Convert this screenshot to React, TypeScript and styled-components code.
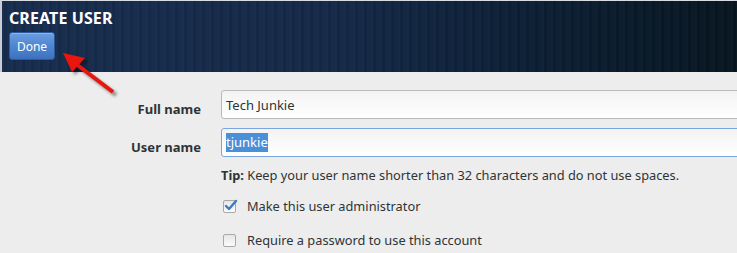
import React from "react";
import styled, { createGlobalStyle } from "styled-components";

const Global = createGlobalStyle`
  html, body { margin: 0; padding: 0; background: #ededed; overflow: hidden; }
  body { font-family: "Noto Sans", "Open Sans", sans-serif; color: #2e3436; }
`;

const Page = styled.div`
  position: relative;
  width: 737px;
  height: 253px;
  background: #ededed;
  overflow: hidden;
`;

const Header = styled.header`
  height: 71px;
  border-top: 1px solid #d9dde3;
  border-left: 2px solid #c9ced6;
  box-sizing: content-box;
  padding: 0 0 0 7px;
  display: flex;
  flex-direction: column;
  align-items: flex-start;
  background:
    repeating-linear-gradient(90deg, rgba(255,255,255,0.025) 0 2px, rgba(0,0,0,0.03) 2px 5px, rgba(255,255,255,0.015) 5px 9px),
    linear-gradient(90deg, #172b4d 0%, #142846 45%, #0c1f35 70%, #06151f 100%);
`;

const Title = styled.h1`
  margin: 7px 0 0 0;
  font-size: 16px;
  line-height: 21px;
  font-weight: 700;
  color: #ffffff;
  letter-spacing: 0.1px;
`;

const DoneButton = styled.button`
  margin-top: 3px;
  width: 46px;
  height: 28px;
  border-radius: 3px;
  border: 1px solid #2c5a9c;
  background: linear-gradient(180deg, #6b9ee0 0%, #4f86d2 50%, #3e71bd 100%);
  box-shadow: inset 0 1px 0 rgba(255,255,255,0.25);
  color: #ffffff;
  font-family: "Noto Sans", sans-serif;
  font-size: 12px;
  font-weight: 400;
  padding: 0;
`;

const Form = styled.div`
  display: grid;
  grid-template-columns: 201px 560px;
  column-gap: 20px;
  padding-top: 18px;
  align-items: center;
`;

const Label = styled.label`
  justify-self: end;
  font-size: 13px;
  font-weight: 700;
  color: #2e3436;
`;

const Field = styled.div<{ $focused?: boolean }>`
  height: 27px;
  margin-bottom: 9px;
  border: 1px solid ${(p) => (p.$focused ? "#79a6e0" : "#b9b9b9")};
  border-radius: 3px;
  background: linear-gradient(180deg, #f3f3f3 0%, #ffffff 100%);
  display: flex;
  align-items: center;
  padding-left: 4px;
  font-size: 13px;
  color: #2e3436;
`;

const Selected = styled.span`
  background: #4a90d9;
  color: #ffffff;
  line-height: 19px;
`;

const Spacer = styled.div``;

const Tip = styled.div`
  margin-top: 1px;
  font-size: 12.8px;
  color: #2e3436;
  line-height: 16px;
  b { font-weight: 700; }
`;

const CheckRow = styled.div<{ $gap: number }>`
  margin-top: ${(p) => p.$gap}px;
  display: flex;
  align-items: center;
  font-size: 12.8px;
  line-height: 16px;
`;

const Box = styled.span`
  width: 11px;
  height: 11px;
  margin-left: 2px;
  margin-right: 11px;
  border: 1px solid #a8a8a8;
  border-radius: 2px;
  background: linear-gradient(180deg, #e6e6e6, #fbfbfb);
  position: relative;
  display: inline-block;
`;

const CheckMark = styled.svg`
  position: absolute;
  left: 0;
  top: -2px;
`;

const Arrow = styled.svg`
  position: absolute;
  left: 0;
  top: 0;
  pointer-events: none;
`;

export default function App() {
  return (
    <>
      <Global />
      <Page>
        <Header>
          <Title>CREATE USER</Title>
          <DoneButton>Done</DoneButton>
        </Header>
        <Form>
          <Label>Full name</Label>
          <Field>Tech Junkie</Field>
          <Label>User name</Label>
          <Field $focused>
            <Selected>tjunkie</Selected>
          </Field>
          <Spacer />
          <div>
            <Tip>
              <b>Tip:</b> Keep your user name shorter than 32 characters and do not use spaces.
            </Tip>
            <CheckRow $gap={15}>
              <Box>
                <CheckMark width="14" height="13" viewBox="0 0 14 13">
                  <path d="M2 7 L5 10 L12 2" fill="none" stroke="#3a78c9" strokeWidth="2.4" strokeLinecap="round" strokeLinejoin="round" />
                </CheckMark>
              </Box>
              Make this user administrator
            </CheckRow>
            <CheckRow $gap={18}>
              <Box />
              Require a password to use this account
            </CheckRow>
          </div>
        </Form>
        <Arrow width="737" height="253" viewBox="0 0 737 253">
          <defs>
            <filter id="sh" x="-20%" y="-20%" width="140%" height="140%">
              <feGaussianBlur stdDeviation="1.6" />
            </filter>
          </defs>
          <g transform="translate(3,3)" opacity="0.45" filter="url(#sh)">
            <line x1="113" y1="92" x2="76" y2="64" stroke="#000" strokeWidth="4" />
            <polygon points="63,53 85,58 72,72" fill="#000" />
          </g>
          <line x1="113" y1="92" x2="76" y2="64" stroke="#e8160f" strokeWidth="4" />
          <polygon points="63,53 85,58 72,72" fill="#e8160f" />
        </Arrow>
      </Page>
    </>
  );
}
